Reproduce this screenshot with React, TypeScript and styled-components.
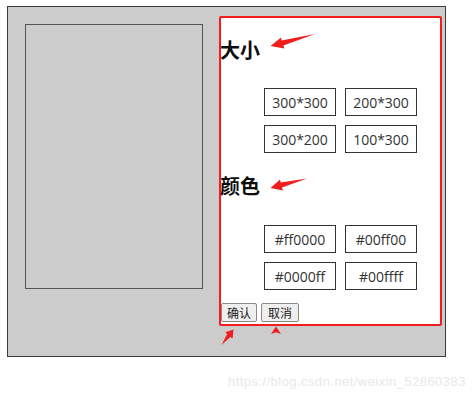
import React from 'react'
import styled, { createGlobalStyle } from 'styled-components'

const GlobalStyle = createGlobalStyle`
  html, body {
    margin: 0;
    padding: 0;
    background: #ffffff;
  }
  body {
    font-family: "Open Sans", "Noto Sans CJK SC", sans-serif;
  }
`

const Page = styled.div`
  position: relative;
  width: 474px;
  height: 399px;
  padding: 6px 0 0 7px;
  box-sizing: border-box;
`

const Stage = styled.div`
  width: 439px;
  height: 351px;
  box-sizing: border-box;
  border: 1px solid #3a3a3a;
  background: #cccccc;
  display: flex;
  align-items: flex-start;
  padding: 9px 0 0 17px;
`

const Preview = styled.div`
  width: 178px;
  height: 265px;
  box-sizing: border-box;
  margin-top: 8px;
  border: 1px solid #555555;
  background: #cccccc;
`

const Panel = styled.div`
  margin-left: 16px;
  width: 223px;
  height: 310px;
  box-sizing: border-box;
  border: 2px solid #f21d1d;
  border-radius: 2px;
  background: #ffffff;
  display: flex;
  flex-direction: column;
`

const Heading = styled.h2<{ $top: number }>`
  margin: ${p => p.$top}px 0 0 -1px;
  font-family: "Noto Sans CJK SC", sans-serif;
  font-size: 20px;
  line-height: 24px;
  font-weight: 700;
  color: #0d0d0d;
`

const OptionGrid = styled.div<{ $top: number }>`
  margin: ${p => p.$top}px 0 0 43px;
  display: grid;
  grid-template-columns: 72px 72px;
  gap: 9px;
`

const Option = styled.button`
  height: 28px;
  box-sizing: border-box;
  padding: 0;
  border: 1px solid #333333;
  background: #ffffff;
  font-family: "Open Sans", "Noto Sans CJK SC", sans-serif;
  font-size: 14px;
  color: #333333;
  cursor: pointer;
`

const Actions = styled.div`
  margin-top: auto;
  display: flex;
  gap: 4px;
  padding-bottom: 2px;
`

const ActionButton = styled.button<{ $width: number }>`
  width: ${p => p.$width}px;
  height: 19px;
  box-sizing: border-box;
  padding: 0;
  border: 1px solid #8a8a8a;
  border-radius: 2px;
  background: #efefef;
  font-family: "Noto Sans CJK SC", sans-serif;
  font-size: 12px;
  line-height: 17px;
  color: #222222;
`

const Watermark = styled.div`
  margin: 17px 0 0 221px;
  font-family: "Liberation Sans", Arial, sans-serif;
  font-size: 13px;
  color: #e8e8e8;
  letter-spacing: 0.45px;
`

const Annotations = styled.svg`
  position: absolute;
  top: 0;
  left: 0;
  pointer-events: none;
`

const sizes = ['300*300', '200*300', '300*200', '100*300']
const colors = ['#ff0000', '#00ff00', '#0000ff', '#00ffff']

const arrows = [
  '270.5,46 281,37.5 281.6,40.6 315,34 283.4,45.4 284.4,48.6',
  '270.5,188 280,179.6 280.7,182.5 307,178.6 282,187.6 283,190.6',
  '233.5,329.5 232.6,338.6 230.4,336.9 221.5,345 227.2,334 225.3,332.2',
  '276,326.5 281,334 276,332.3 271,334',
]

export default function App() {
  return (
    <>
      <GlobalStyle />
      <Page>
        <Stage>
          <Preview />
          <Panel>
            <Heading $top={20}>大小</Heading>
            <OptionGrid $top={26}>
              {sizes.map(s => (
                <Option key={s}>{s}</Option>
              ))}
            </OptionGrid>
            <Heading $top={21}>颜色</Heading>
            <OptionGrid $top={27}>
              {colors.map(c => (
                <Option key={c}>{c}</Option>
              ))}
            </OptionGrid>
            <Actions>
              <ActionButton $width={36}>确认</ActionButton>
              <ActionButton $width={38}>取消</ActionButton>
            </Actions>
          </Panel>
        </Stage>
        <Watermark>https://blog.csdn.net/weixin_52860383</Watermark>
        <Annotations width={474} height={399} viewBox="0 0 474 399">
          {arrows.map(points => (
            <polygon key={points} points={points} fill="#f01e1e" />
          ))}
        </Annotations>
      </Page>
    </>
  )
}
